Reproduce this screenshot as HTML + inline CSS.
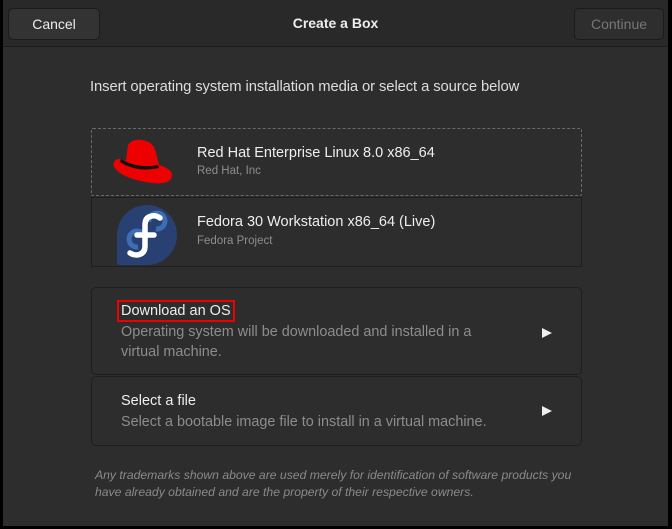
<!DOCTYPE html>
<html><head><meta charset="utf-8"><style>
*{margin:0;padding:0;box-sizing:border-box}
body{width:672px;height:529px;background:#000;font-family:"Liberation Sans","DejaVu Sans",sans-serif;overflow:hidden;position:relative}
#win{position:absolute;left:3px;top:0;width:665px;height:526px;background:#2d2d2d}
#hdr{position:absolute;left:0;top:0;width:665px;height:47px;background:#292929;border-bottom:1px solid #1c1c1c}
.btn{position:absolute;top:8px;height:32px;border:1px solid #1b1b1b;border-radius:5px;background:#333;color:#eee;font-size:14px;line-height:30px;text-align:center}
.title{position:absolute;left:0;width:665px;top:15px;text-align:center;color:#eee;font-weight:bold;font-size:14px}
.p{position:absolute;left:87px;top:79px;color:#ddd;font-size:14.8px;letter-spacing:-0.1px}
.box{position:absolute;left:88px;width:491px;background:#2d2d2d;border:1px solid #1e1e1e;border-radius:4px}
.t1{position:absolute;color:#eee;font-size:14.5px}
.t2{position:absolute;color:#8e8e8e;font-size:11.5px}
.g{color:#8d8d8d;font-size:14.4px;position:absolute;left:29px;line-height:20px}
.arr{position:absolute;left:450px;width:0;height:0;border-left:10px solid #eee;border-top:5.5px solid transparent;border-bottom:5.5px solid transparent}
.fine{position:absolute;left:92px;top:467px;color:#8a8a8a;font-style:italic;font-size:12.2px;line-height:17px}
</style></head><body>
<div id="win">
<div id="hdr">
<div class="btn" style="left:5px;width:92px">Cancel</div>
<div class="title">Create a Box</div>
<div class="btn" style="left:571px;width:90px;color:#777;background:#2e2e2e">Continue</div>
</div>
<div class="p">Insert operating system installation media or select a source below</div>
<div class="box" style="top:128px;height:68px;border:1px dashed #6a6a6a;border-radius:2px">
 <svg style="position:absolute;left:20px;top:8px" width="64" height="50" viewBox="0 0 64 50">
  <path d="M16 8 Q22 0 34 4 Q42 6 44 16 L47 28 Q60 32 60 38 Q60 48 40 46 Q10 42 2 30 Q0 22 8 22 L14 24 Z" fill="#e00"/>
  <path d="M9 22 Q25 32 46 28 L47 31 Q25 36 8 25 Z" fill="#111"/>
 </svg>
 <div class="t1" style="left:105px;top:16px">Red Hat Enterprise Linux 8.0 x86_64</div>
 <div class="t2" style="left:105px;top:36px">Red Hat, Inc</div>
</div>
<div class="box" style="top:197px;height:70px;border-radius:0">
 <svg style="position:absolute;left:24px;top:6px" width="62" height="62" viewBox="0 0 62 62">
  <path d="M31 1 A30 30 0 1 1 31 61 L4 61 Q1 61 1 58 L1 31 A30 30 0 0 1 31 1 Z" fill="#294172"/>
  <path d="M22 43 A8 8 0 1 1 29 36" fill="none" stroke="#3c6eb4" stroke-width="5"/>
  <path d="M40 25 A8 8 0 1 0 33 18" fill="none" stroke="#3c6eb4" stroke-width="5"/>
  <path d="M44 14 Q40 11 36 12 Q29 13 29 21 L29 42 Q29 50 21 51 Q17 51 14 49" fill="none" stroke="#fff" stroke-width="5.5" stroke-linecap="round"/>
  <path d="M21 31 L38 31" stroke="#fff" stroke-width="5.5" stroke-linecap="round"/>
 </svg>
 <div class="t1" style="left:105px;top:16px">Fedora 30 Workstation x86_64 (Live)</div>
 <div class="t2" style="left:105px;top:37px">Fedora Project</div>
</div>
<div class="box" style="top:287px;height:88px;border-radius:5px">
 <div class="t1" style="left:25px;top:12px;border:2px solid #e00;padding:1px 2px;line-height:16px">Download an OS</div>
 <div class="g" style="top:34px">Operating system will be downloaded and installed in a<br>virtual machine.</div>
 <div class="arr" style="top:40px"></div>
</div>
<div class="box" style="top:376px;height:70px;border-radius:5px">
 <div class="t1" style="left:29px;top:16px">Select a file</div>
 <div class="g" style="top:35px">Select a bootable image file to install in a virtual machine.</div>
 <div class="arr" style="top:29px"></div>
</div>
<div class="fine">Any trademarks shown above are used merely for identification of software products you<br>have already obtained and are the property of their respective owners.</div>
</div>
</body></html>
